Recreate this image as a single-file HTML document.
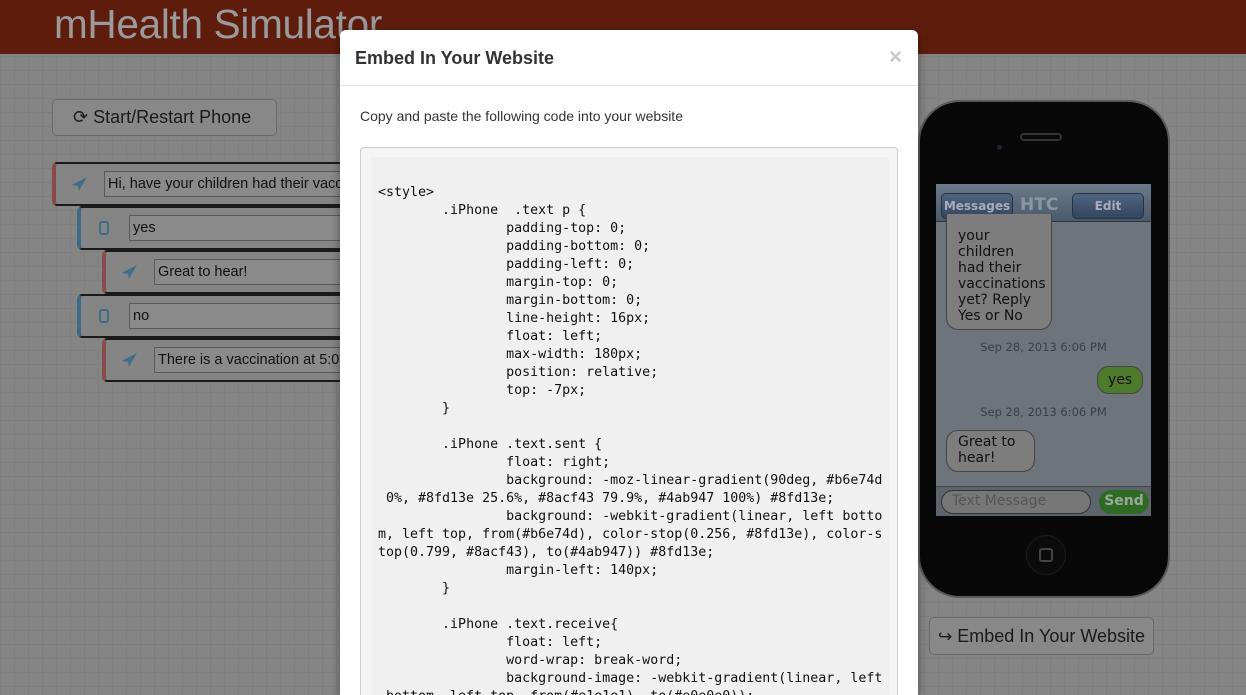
<!DOCTYPE html>
<html style="width:1246px;height:695px;overflow:hidden"><head><meta charset="utf-8"><style>
*{box-sizing:border-box;margin:0;padding:0}
body{width:1246px;height:695px;overflow:hidden;position:relative;font-family:"Liberation Sans",sans-serif;
background-color:#858585;background-image:linear-gradient(#7f7f7f 1px,transparent 1px),linear-gradient(90deg,#7f7f7f 1px,transparent 1px);background-size:14px 14px}
.hdr{position:absolute;left:0;top:0;width:1246px;height:54px;background:#5e1d0c}
.hdr h1{position:absolute;left:54px;top:1px;font-size:40.5px;font-weight:normal;color:#9a9a9a;letter-spacing:-0.3px}
.btn{position:absolute;border:1px solid #6a6a6a;border-radius:5px;background:#888;color:#1a1a1a;font-size:18px}
.row{position:absolute;height:44px;border:2px solid #1a1a1a;border-left:4px solid #8a4a4a;border-radius:5px 0 0 5px;background:#858585}
.row.b{border-left-color:#3f6c87}
.row .in{position:absolute;top:7px;height:26px;border:1px solid #5a5a5a;background:#8a8a8a;font-size:14.5px;color:#111;padding:4px 3px;white-space:nowrap;overflow:hidden}
.row svg{position:absolute;top:13px}
.modal{position:absolute;left:340px;top:30px;width:578px;height:665px;background:#fff;border-radius:6px 6px 0 0;box-shadow:0 3px 10px rgba(0,0,0,.4);overflow:hidden}
.mh{height:56px;border-bottom:1px solid #e5e5e5;padding:18px 15px}
.mh b{font-size:18px;color:#333;font-weight:600}
.x{position:absolute;right:16px;top:14px;font-size:22px;color:#c8c8c8;font-weight:bold}
.mb p{position:absolute;left:20px;top:78px;font-size:14px;color:#333}
.box{position:absolute;left:20px;top:117px;width:538px;height:548px;border:1px solid #ccc;border-bottom:0;border-radius:4px 4px 0 0;background:#f5f5f5;overflow:hidden}
.pre{position:absolute;left:10px;top:9px;width:518px;height:539px;background:#f0f0f0;padding:27px 7px;font-family:"DejaVu Sans Mono",monospace;font-size:13.3px;line-height:18px;color:#111;white-space:pre;tab-size:8;overflow:hidden}
.phone{position:absolute;left:918px;top:100px;width:252px;height:498px;border-radius:42px;background:#080808;border:2px solid #5a5a5a}
.scr{position:absolute;left:936px;top:184px;width:215px;height:332px;background:#6d747c;overflow:hidden}
.bar{position:absolute;left:0;top:0;width:215px;height:38px;background:linear-gradient(#6b7a8a,#4b5a6b);border-bottom:1px solid #2b3440}
.nb{position:absolute;top:9px;height:26px;border:1px solid #253345;border-radius:5px;background:linear-gradient(#4f6480,#33465e);color:#aab;font-size:12px;font-weight:bold;text-align:center;line-height:24px;font-family:"DejaVu Sans",sans-serif}
.bub{position:absolute;border:1px solid #444;border-radius:12px;background:#7d7d7d;font-family:"DejaVu Sans",sans-serif;font-size:14px;line-height:16px;color:#111;padding:3px 11px}
.ts{position:absolute;width:215px;text-align:center;font-family:"DejaVu Sans",sans-serif;font-size:11.5px;color:#3a3f46}
</style></head><body>
<div class="hdr"><h1>mHealth Simulator</h1></div>
<div class="btn" style="left:52px;top:99px;width:225px;height:37px;padding:7px 0 0 20px"><span style="font-size:18px">⟳</span> Start/Restart Phone</div>

<div class="row" style="left:52px;top:162px;width:300px"><svg style="left:16px" width="16" height="14" viewBox="0 0 16 14"><path d="M15 0L0 8l6 1 1 5 2-4z" fill="#3f6c87"/></svg><div class="in" style="left:48px;width:260px">Hi, have your children had their vaccinations</div></div>
<div class="row b" style="left:77px;top:206px;width:275px"><svg style="left:18px" width="10" height="14" viewBox="0 0 10 14"><rect x="1" y="1" width="8" height="12" rx="2" fill="none" stroke="#3f6c87" stroke-width="2"/></svg><div class="in" style="left:48px;width:230px">yes</div></div>
<div class="row" style="left:102px;top:250px;width:250px"><svg style="left:16px" width="16" height="14" viewBox="0 0 16 14"><path d="M15 0L0 8l6 1 1 5 2-4z" fill="#3f6c87"/></svg><div class="in" style="left:48px;width:210px">Great to hear!</div></div>
<div class="row b" style="left:77px;top:294px;width:275px"><svg style="left:18px" width="10" height="14" viewBox="0 0 10 14"><rect x="1" y="1" width="8" height="12" rx="2" fill="none" stroke="#3f6c87" stroke-width="2"/></svg><div class="in" style="left:48px;width:230px">no</div></div>
<div class="row" style="left:102px;top:338px;width:250px"><svg style="left:16px" width="16" height="14" viewBox="0 0 16 14"><path d="M15 0L0 8l6 1 1 5 2-4z" fill="#3f6c87"/></svg><div class="in" style="left:48px;width:210px">There is a vaccination at 5:00</div></div>

<div class="phone"></div>
<div style="position:absolute;left:1020px;top:133px;width:42px;height:8px;border-radius:4px;border:2px solid #333"></div>
<div style="position:absolute;left:997px;top:145px;width:5px;height:5px;border-radius:50%;background:#223"></div>
<div class="scr">
 <div class="bar"><div class="nb" style="left:5px;width:72px">Messages</div><div style="position:absolute;left:84px;top:11px;font-size:17px;font-weight:bold;color:#8a96a4;font-family:'DejaVu Sans',sans-serif">HTC</div><div class="nb" style="left:136px;width:72px">Edit</div></div>
 <div class="bub" style="left:10px;top:30px;width:106px;height:116px;padding-top:14px;border-top:0;border-radius:0 0 12px 12px">your<br>children<br>had their<br>vaccinations<br>yet? Reply<br>Yes or No</div>
 <div class="ts" style="top:156px">Sep 28, 2013 6:06 PM</div>
 <div class="bub" style="left:161px;top:182px;background:#4e7a2c;padding:5px 10px">yes</div>
 <div class="ts" style="top:221px">Sep 28, 2013 6:06 PM</div>
 <div class="bub" style="left:10px;top:246px;width:89px;height:42px">Great to<br>hear!</div>
 <div style="position:absolute;left:0;top:302px;width:215px;height:30px;background:#5e646b;border-top:1px solid #444"></div>
 <div style="position:absolute;left:5px;top:306px;width:150px;height:24px;border-radius:12px;background:#777;border:1px solid #333;font-size:14px;color:#555;padding:2px 10px;font-family:'DejaVu Sans',sans-serif">Text Message</div>
 <div style="position:absolute;left:163px;top:306px;width:50px;height:24px;border-radius:12px;background:#2f6a25;color:#9a9;font-size:14px;font-weight:bold;text-align:center;line-height:23px;font-family:'DejaVu Sans',sans-serif">Send</div>
</div>
<div style="position:absolute;left:1026px;top:535px;width:40px;height:40px;border-radius:50%;background:#0b0b0b;border:1px solid #1c1c1c"></div>
<div style="position:absolute;left:1039px;top:548px;width:14px;height:14px;border-radius:3px;border:2px solid #444"></div>
<div class="btn" style="left:929px;top:617px;width:225px;height:38px;padding:8px 0 0 8px"><span style="font-size:17px">↪</span> Embed In Your Website</div>

<div class="modal">
 <div class="mh"><b>Embed In Your Website</b></div><div class="x">×</div>
 <div class="mb"><p>Copy and paste the following code into your website</p>
 <div class="box"><div class="pre">&lt;style&gt;
	.iPhone  .text p {
		padding-top: 0;
		padding-bottom: 0;
		padding-left: 0;
		margin-top: 0;
		margin-bottom: 0;
		line-height: 16px;
		float: left;
		max-width: 180px;
		position: relative;
		top: -7px;
	}

	.iPhone .text.sent {
		float: right;
		background: -moz-linear-gradient(90deg, #b6e74d
 0%, #8fd13e 25.6%, #8acf43 79.9%, #4ab947 100%) #8fd13e;
		background: -webkit-gradient(linear, left botto
m, left top, from(#b6e74d), color-stop(0.256, #8fd13e), color-s
top(0.799, #8acf43), to(#4ab947)) #8fd13e;
		margin-left: 140px;
	}

	.iPhone .text.receive{
		float: left;
		word-wrap: break-word;
		background-image: -webkit-gradient(linear, left
 bottom, left top, from(#e1e1e1), to(#e0e0e0));</div></div></div>
</div>
</body></html>
